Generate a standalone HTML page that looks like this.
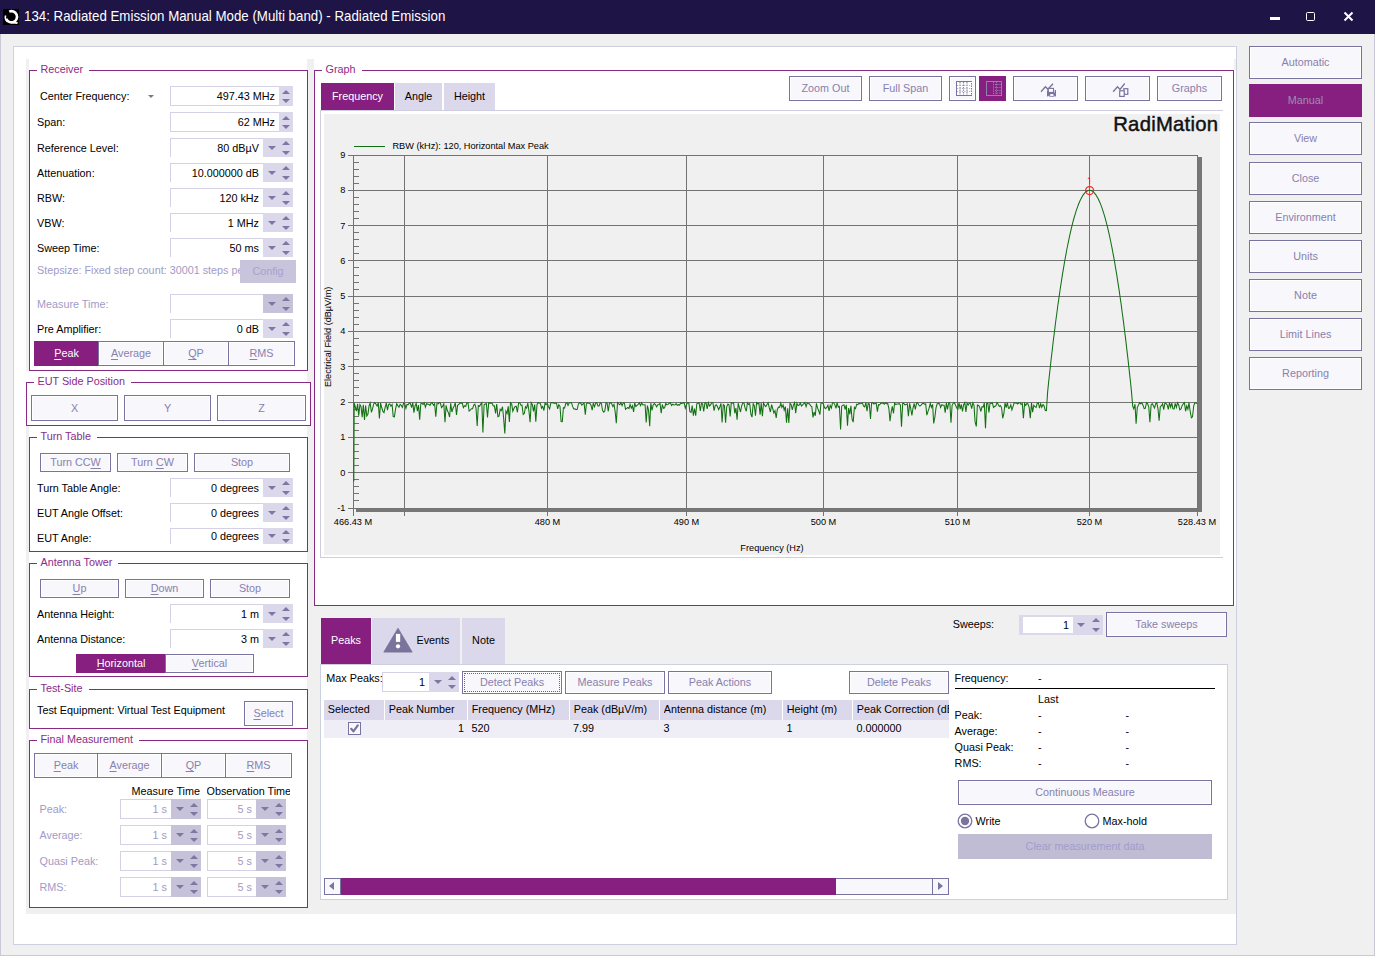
<!DOCTYPE html>
<html><head><meta charset="utf-8"><title>Radiated Emission</title>
<style>
html,body{margin:0;padding:0;}
body{width:1375px;height:956px;position:relative;overflow:hidden;background:#f0f0f0;font-family:"Liberation Sans",sans-serif;}
.r{position:absolute;}
.t{position:absolute;white-space:nowrap;}
.bt{display:flex;align-items:center;justify-content:center;line-height:1;}
u{text-decoration:underline;text-underline-offset:1.5px;}
</style></head><body>
<div class="r" style="left:0;top:0;width:1375px;height:34px;background:#1e1446"></div>
<div class="r" style="left:0px;top:34px;width:1px;height:922px;background:#c9c9da;"></div>
<div class="r" style="left:1374px;top:34px;width:1px;height:922px;background:#c9c9da;"></div>
<div class="r" style="left:0px;top:955px;width:1375px;height:1px;background:#c9c9da;"></div>
<svg class="r" style="left:3px;top:9px" width="16" height="16" viewBox="0 0 16 16">
<rect width="16" height="16" fill="#000"/>
<path d="M6.2 2.6 A5.6 5.6 0 1 1 3.2 9.8" fill="none" stroke="#fff" stroke-width="2.6"/>
<path d="M2.6 6.5 A5.6 5.6 0 0 0 4.5 12.6" fill="none" stroke="#fff" stroke-width="1.6"/>
<path d="M9.5 12.8 L15 13.2 L14.2 15 L10 14.6 Z" fill="#fff"/>
</svg>
<div class="t" style="left:23.8px;top:8.37px;font-size:14.4px;line-height:17.28px;color:#fff;transform:scaleX(0.924);transform-origin:0 0;">134: Radiated Emission Manual Mode (Multi band) - Radiated Emission</div>
<div class="r" style="left:1270px;top:17px;width:10px;height:3px;background:#fff;"></div>
<div class="r" style="left:1306px;top:12px;width:9px;height:9px;box-sizing:border-box;border:1.5px solid #fff;border-radius:1.5px"></div>
<svg class="r" style="left:1343px;top:11px" width="11" height="11" viewBox="0 0 11 11"><path d="M1.5 1.5 L9.5 9.5 M9.5 1.5 L1.5 9.5" stroke="#fff" stroke-width="2"/></svg>
<div class="r" style="left:13px;top:46px;width:1224px;height:899px;background:#fff;box-sizing:border-box;border:1px solid #cdd0df;"></div>
<div class="r" style="left:26px;top:59px;width:3px;height:312px;background:#f0f0f0;"></div>
<div class="r" style="left:26px;top:426px;width:3px;height:488px;background:#f0f0f0;"></div>
<div class="r" style="left:307px;top:59px;width:7px;height:855px;background:#f0f0f0;"></div>
<div class="r" style="left:26px;top:907px;width:1210px;height:7px;background:#f0f0f0;"></div>
<div class="r" style="left:314px;top:606px;width:922px;height:308px;background:#f0f0f0;"></div>
<div class="r" style="left:1234px;top:59px;width:2px;height:11px;background:#f0f0f0;"></div>
<div class="r" style="left:29px;top:70px;width:279px;height:301px;background:#fff;box-sizing:border-box;border:1px solid #862a84;"></div>
<div class="t" style="left:37px;top:62.98px;font-size:10.8px;line-height:12.96px;color:#8b2b89;background:#fff;padding:0 6px 0 3.5px;">Receiver</div>
<div class="t" style="left:40px;top:89.78px;font-size:10.8px;line-height:12.96px;color:#000;">Center Frequency:</div>
<div class="r" style="left:170px;top:86px;width:123px;height:20px;background:#fff;box-sizing:border-box;border:1px solid #d4d0e6;"></div>
<div class="r" style="left:279px;top:86px;width:14px;height:20px;background:#dcd8ec;"></div>
<div class="r" style="left:281.5px;top:89.8px;width:0;height:0;border-left:4.5px solid transparent;border-right:4.5px solid transparent;border-bottom:4px solid #7d77a1;"></div>
<div class="r" style="left:281.5px;top:99.0px;width:0;height:0;border-left:4.5px solid transparent;border-right:4.5px solid transparent;border-top:4px solid #7d77a1;"></div>
<div class="t" style="right:1100px;top:90.38px;font-size:10.8px;line-height:12.96px;color:#000;text-align:right;">497.43 MHz</div>
<div class="t" style="left:37px;top:115.78px;font-size:10.8px;line-height:12.96px;color:#000;">Span:</div>
<div class="r" style="left:170px;top:112px;width:123px;height:20px;background:#fff;box-sizing:border-box;border:1px solid #d4d0e6;"></div>
<div class="r" style="left:279px;top:112px;width:14px;height:20px;background:#dcd8ec;"></div>
<div class="r" style="left:281.5px;top:115.8px;width:0;height:0;border-left:4.5px solid transparent;border-right:4.5px solid transparent;border-bottom:4px solid #7d77a1;"></div>
<div class="r" style="left:281.5px;top:125.0px;width:0;height:0;border-left:4.5px solid transparent;border-right:4.5px solid transparent;border-top:4px solid #7d77a1;"></div>
<div class="t" style="right:1100px;top:116.38px;font-size:10.8px;line-height:12.96px;color:#000;text-align:right;">62 MHz</div>
<div class="t" style="left:37px;top:141.78px;font-size:10.8px;line-height:12.96px;color:#000;">Reference Level:</div>
<div class="r" style="left:170px;top:138px;width:93px;height:19px;background:#fff;border-top:1px solid #d4d0e6;border-left:1px solid #d4d0e6;box-sizing:border-box;"></div>
<div class="r" style="left:263px;top:138px;width:30px;height:19px;background:#dcd8ec;"></div>
<div class="r" style="left:267.5px;top:145.5px;width:0;height:0;border-left:4.0px solid transparent;border-right:4.0px solid transparent;border-top:4px solid #7d77a1;"></div>
<div class="r" style="left:281.5px;top:141.3px;width:0;height:0;border-left:4.5px solid transparent;border-right:4.5px solid transparent;border-bottom:4px solid #7d77a1;"></div>
<div class="r" style="left:281.5px;top:150.5px;width:0;height:0;border-left:4.5px solid transparent;border-right:4.5px solid transparent;border-top:4px solid #7d77a1;"></div>
<div class="t" style="right:1116px;top:141.88px;font-size:10.8px;line-height:12.96px;color:#000;text-align:right;">80 dBµV</div>
<div class="t" style="left:37px;top:166.78px;font-size:10.8px;line-height:12.96px;color:#000;">Attenuation:</div>
<div class="r" style="left:170px;top:163px;width:93px;height:19px;background:#fff;border-top:1px solid #d4d0e6;border-left:1px solid #d4d0e6;box-sizing:border-box;"></div>
<div class="r" style="left:263px;top:163px;width:30px;height:19px;background:#dcd8ec;"></div>
<div class="r" style="left:267.5px;top:170.5px;width:0;height:0;border-left:4.0px solid transparent;border-right:4.0px solid transparent;border-top:4px solid #7d77a1;"></div>
<div class="r" style="left:281.5px;top:166.3px;width:0;height:0;border-left:4.5px solid transparent;border-right:4.5px solid transparent;border-bottom:4px solid #7d77a1;"></div>
<div class="r" style="left:281.5px;top:175.5px;width:0;height:0;border-left:4.5px solid transparent;border-right:4.5px solid transparent;border-top:4px solid #7d77a1;"></div>
<div class="t" style="right:1116px;top:166.88px;font-size:10.8px;line-height:12.96px;color:#000;text-align:right;">10.000000 dB</div>
<div class="t" style="left:37px;top:191.78px;font-size:10.8px;line-height:12.96px;color:#000;">RBW:</div>
<div class="r" style="left:170px;top:188px;width:93px;height:19px;background:#fff;border-top:1px solid #d4d0e6;border-left:1px solid #d4d0e6;box-sizing:border-box;"></div>
<div class="r" style="left:263px;top:188px;width:30px;height:19px;background:#dcd8ec;"></div>
<div class="r" style="left:267.5px;top:195.5px;width:0;height:0;border-left:4.0px solid transparent;border-right:4.0px solid transparent;border-top:4px solid #7d77a1;"></div>
<div class="r" style="left:281.5px;top:191.3px;width:0;height:0;border-left:4.5px solid transparent;border-right:4.5px solid transparent;border-bottom:4px solid #7d77a1;"></div>
<div class="r" style="left:281.5px;top:200.5px;width:0;height:0;border-left:4.5px solid transparent;border-right:4.5px solid transparent;border-top:4px solid #7d77a1;"></div>
<div class="t" style="right:1116px;top:191.88px;font-size:10.8px;line-height:12.96px;color:#000;text-align:right;">120 kHz</div>
<div class="t" style="left:37px;top:216.78px;font-size:10.8px;line-height:12.96px;color:#000;">VBW:</div>
<div class="r" style="left:170px;top:213px;width:93px;height:19px;background:#fff;border-top:1px solid #d4d0e6;border-left:1px solid #d4d0e6;box-sizing:border-box;"></div>
<div class="r" style="left:263px;top:213px;width:30px;height:19px;background:#dcd8ec;"></div>
<div class="r" style="left:267.5px;top:220.5px;width:0;height:0;border-left:4.0px solid transparent;border-right:4.0px solid transparent;border-top:4px solid #7d77a1;"></div>
<div class="r" style="left:281.5px;top:216.3px;width:0;height:0;border-left:4.5px solid transparent;border-right:4.5px solid transparent;border-bottom:4px solid #7d77a1;"></div>
<div class="r" style="left:281.5px;top:225.5px;width:0;height:0;border-left:4.5px solid transparent;border-right:4.5px solid transparent;border-top:4px solid #7d77a1;"></div>
<div class="t" style="right:1116px;top:216.88px;font-size:10.8px;line-height:12.96px;color:#000;text-align:right;">1 MHz</div>
<div class="t" style="left:37px;top:241.78px;font-size:10.8px;line-height:12.96px;color:#000;">Sweep Time:</div>
<div class="r" style="left:170px;top:238px;width:93px;height:19px;background:#fff;border-top:1px solid #d4d0e6;border-left:1px solid #d4d0e6;box-sizing:border-box;"></div>
<div class="r" style="left:263px;top:238px;width:30px;height:19px;background:#dcd8ec;"></div>
<div class="r" style="left:267.5px;top:245.5px;width:0;height:0;border-left:4.0px solid transparent;border-right:4.0px solid transparent;border-top:4px solid #7d77a1;"></div>
<div class="r" style="left:281.5px;top:241.3px;width:0;height:0;border-left:4.5px solid transparent;border-right:4.5px solid transparent;border-bottom:4px solid #7d77a1;"></div>
<div class="r" style="left:281.5px;top:250.5px;width:0;height:0;border-left:4.5px solid transparent;border-right:4.5px solid transparent;border-top:4px solid #7d77a1;"></div>
<div class="t" style="right:1116px;top:241.88px;font-size:10.8px;line-height:12.96px;color:#000;text-align:right;">50 ms</div>
<div class="t" style="left:37px;top:297.78px;font-size:10.8px;line-height:12.96px;color:#a29ac6;">Measure Time:</div>
<div class="r" style="left:170px;top:294px;width:93px;height:19px;background:#fff;border-top:1px solid #d4d0e6;border-left:1px solid #d4d0e6;box-sizing:border-box;"></div>
<div class="r" style="left:263px;top:294px;width:30px;height:19px;background:#c6c2da;"></div>
<div class="r" style="left:267.5px;top:301.5px;width:0;height:0;border-left:4.0px solid transparent;border-right:4.0px solid transparent;border-top:4px solid #7d77a1;"></div>
<div class="r" style="left:281.5px;top:297.3px;width:0;height:0;border-left:4.5px solid transparent;border-right:4.5px solid transparent;border-bottom:4px solid #7d77a1;"></div>
<div class="r" style="left:281.5px;top:306.5px;width:0;height:0;border-left:4.5px solid transparent;border-right:4.5px solid transparent;border-top:4px solid #7d77a1;"></div>
<div class="t" style="left:37px;top:322.78px;font-size:10.8px;line-height:12.96px;color:#000;">Pre Amplifier:</div>
<div class="r" style="left:170px;top:319px;width:93px;height:19px;background:#fff;border-top:1px solid #d4d0e6;border-left:1px solid #d4d0e6;box-sizing:border-box;"></div>
<div class="r" style="left:263px;top:319px;width:30px;height:19px;background:#dcd8ec;"></div>
<div class="r" style="left:267.5px;top:326.5px;width:0;height:0;border-left:4.0px solid transparent;border-right:4.0px solid transparent;border-top:4px solid #7d77a1;"></div>
<div class="r" style="left:281.5px;top:322.3px;width:0;height:0;border-left:4.5px solid transparent;border-right:4.5px solid transparent;border-bottom:4px solid #7d77a1;"></div>
<div class="r" style="left:281.5px;top:331.5px;width:0;height:0;border-left:4.5px solid transparent;border-right:4.5px solid transparent;border-top:4px solid #7d77a1;"></div>
<div class="t" style="right:1116px;top:322.88px;font-size:10.8px;line-height:12.96px;color:#000;text-align:right;">0 dB</div>
<div class="r" style="left:148.0px;top:94.8px;width:0;height:0;border-left:3.1px solid transparent;border-right:3.1px solid transparent;border-top:3.4px solid #7a7a7a;"></div>
<div class="t" style="left:37px;top:263.78px;font-size:10.8px;line-height:12.96px;color:#a29ac6;width:203px;overflow:hidden;">Stepsize: Fixed step count: 30001 steps per</div>
<div class="r" style="left:240px;top:260px;width:56px;height:23px;background:#c8c4dc;"></div>
<div class="t bt" style="left:240px;top:260px;width:56px;height:23px;font-size:10.8px;color:#a9a1cc;">Config</div>
<div class="r" style="left:34px;top:341px;width:65px;height:25px;background:#861f80;"></div>
<div class="t bt" style="left:34px;top:341px;width:65px;height:25px;font-size:10.8px;color:#fff;"><span><u>P</u>eak</span></div>
<div class="r" style="left:98px;top:341px;width:66px;height:25px;background:#f7f7fc;box-sizing:border-box;border:1px solid #79739f;box-shadow: inset 0 0 0 1px #fff;"></div>
<div class="t bt" style="left:98px;top:341px;width:66px;height:25px;font-size:10.8px;color:#8981ad;"><span><u>A</u>verage</span></div>
<div class="r" style="left:163px;top:341px;width:66px;height:25px;background:#f7f7fc;box-sizing:border-box;border:1px solid #79739f;box-shadow: inset 0 0 0 1px #fff;"></div>
<div class="t bt" style="left:163px;top:341px;width:66px;height:25px;font-size:10.8px;color:#8981ad;"><span><u>Q</u>P</span></div>
<div class="r" style="left:228px;top:341px;width:67px;height:25px;background:#f7f7fc;box-sizing:border-box;border:1px solid #79739f;box-shadow: inset 0 0 0 1px #fff;"></div>
<div class="t bt" style="left:228px;top:341px;width:67px;height:25px;font-size:10.8px;color:#8981ad;"><span><u>R</u>MS</span></div>
<div class="r" style="left:26px;top:382px;width:285px;height:44px;background:#fff;box-sizing:border-box;border:1px solid #862a84;"></div>
<div class="t" style="left:34px;top:374.98px;font-size:10.8px;line-height:12.96px;color:#8b2b89;background:#fff;padding:0 6px 0 3.5px;">EUT Side Position</div>
<div class="r" style="left:31px;top:395px;width:87px;height:26px;background:#f7f7fc;box-sizing:border-box;border:1px solid #79739f;box-shadow: inset 0 0 0 1px #fff;"></div>
<div class="t bt" style="left:31px;top:395px;width:87px;height:26px;font-size:10.8px;color:#8981ad;"><span>X</span></div>
<div class="r" style="left:124px;top:395px;width:87px;height:26px;background:#f7f7fc;box-sizing:border-box;border:1px solid #79739f;box-shadow: inset 0 0 0 1px #fff;"></div>
<div class="t bt" style="left:124px;top:395px;width:87px;height:26px;font-size:10.8px;color:#8981ad;"><span>Y</span></div>
<div class="r" style="left:217px;top:395px;width:89px;height:26px;background:#f7f7fc;box-sizing:border-box;border:1px solid #79739f;box-shadow: inset 0 0 0 1px #fff;"></div>
<div class="t bt" style="left:217px;top:395px;width:89px;height:26px;font-size:10.8px;color:#8981ad;"><span>Z</span></div>
<div class="r" style="left:29px;top:437px;width:279px;height:115px;background:#fff;box-sizing:border-box;border:1px solid #862a84;"></div>
<div class="t" style="left:37px;top:429.98px;font-size:10.8px;line-height:12.96px;color:#8b2b89;background:#fff;padding:0 6px 0 3.5px;">Turn Table</div>
<div class="r" style="left:40px;top:453px;width:71px;height:19px;background:#f7f7fc;box-sizing:border-box;border:1px solid #79739f;box-shadow: inset 0 0 0 1px #fff;"></div>
<div class="t bt" style="left:40px;top:453px;width:71px;height:19px;font-size:10.8px;color:#8981ad;"><span>Turn CC<u>W</u></span></div>
<div class="r" style="left:117px;top:453px;width:71px;height:19px;background:#f7f7fc;box-sizing:border-box;border:1px solid #79739f;box-shadow: inset 0 0 0 1px #fff;"></div>
<div class="t bt" style="left:117px;top:453px;width:71px;height:19px;font-size:10.8px;color:#8981ad;"><span>Turn <u>C</u>W</span></div>
<div class="r" style="left:194px;top:453px;width:96px;height:19px;background:#f7f7fc;box-sizing:border-box;border:1px solid #79739f;box-shadow: inset 0 0 0 1px #fff;"></div>
<div class="t bt" style="left:194px;top:453px;width:96px;height:19px;font-size:10.8px;color:#8981ad;"><span>Stop</span></div>
<div class="t" style="left:37px;top:481.78px;font-size:10.8px;line-height:12.96px;color:#000;">Turn Table Angle:</div>
<div class="r" style="left:170px;top:478px;width:93px;height:19px;background:#fff;border-top:1px solid #d4d0e6;border-left:1px solid #d4d0e6;box-sizing:border-box;"></div>
<div class="r" style="left:263px;top:478px;width:30px;height:19px;background:#dcd8ec;"></div>
<div class="r" style="left:267.5px;top:485.5px;width:0;height:0;border-left:4.0px solid transparent;border-right:4.0px solid transparent;border-top:4px solid #7d77a1;"></div>
<div class="r" style="left:281.5px;top:481.3px;width:0;height:0;border-left:4.5px solid transparent;border-right:4.5px solid transparent;border-bottom:4px solid #7d77a1;"></div>
<div class="r" style="left:281.5px;top:490.5px;width:0;height:0;border-left:4.5px solid transparent;border-right:4.5px solid transparent;border-top:4px solid #7d77a1;"></div>
<div class="t" style="right:1116px;top:481.88px;font-size:10.8px;line-height:12.96px;color:#000;text-align:right;">0 degrees</div>
<div class="t" style="left:37px;top:506.78px;font-size:10.8px;line-height:12.96px;color:#000;">EUT Angle Offset:</div>
<div class="r" style="left:170px;top:503px;width:93px;height:19px;background:#fff;border-top:1px solid #d4d0e6;border-left:1px solid #d4d0e6;box-sizing:border-box;"></div>
<div class="r" style="left:263px;top:503px;width:30px;height:19px;background:#dcd8ec;"></div>
<div class="r" style="left:267.5px;top:510.5px;width:0;height:0;border-left:4.0px solid transparent;border-right:4.0px solid transparent;border-top:4px solid #7d77a1;"></div>
<div class="r" style="left:281.5px;top:506.3px;width:0;height:0;border-left:4.5px solid transparent;border-right:4.5px solid transparent;border-bottom:4px solid #7d77a1;"></div>
<div class="r" style="left:281.5px;top:515.5px;width:0;height:0;border-left:4.5px solid transparent;border-right:4.5px solid transparent;border-top:4px solid #7d77a1;"></div>
<div class="t" style="right:1116px;top:506.88px;font-size:10.8px;line-height:12.96px;color:#000;text-align:right;">0 degrees</div>
<div class="t" style="left:37px;top:531.78px;font-size:10.8px;line-height:12.96px;color:#000;">EUT Angle:</div>
<div class="r" style="left:170px;top:528px;width:93px;height:16px;background:#fff;border-top:1px solid #d4d0e6;border-left:1px solid #d4d0e6;box-sizing:border-box;"></div>
<div class="r" style="left:263px;top:528px;width:30px;height:16px;background:#dcd8ec;"></div>
<div class="r" style="left:267.5px;top:534.0px;width:0;height:0;border-left:4.0px solid transparent;border-right:4.0px solid transparent;border-top:4px solid #7d77a1;"></div>
<div class="r" style="left:281.5px;top:529.8px;width:0;height:0;border-left:4.5px solid transparent;border-right:4.5px solid transparent;border-bottom:4px solid #7d77a1;"></div>
<div class="r" style="left:281.5px;top:539.0px;width:0;height:0;border-left:4.5px solid transparent;border-right:4.5px solid transparent;border-top:4px solid #7d77a1;"></div>
<div class="t" style="right:1116px;top:530.38px;font-size:10.8px;line-height:12.96px;color:#000;text-align:right;">0 degrees</div>
<div class="r" style="left:29px;top:563px;width:279px;height:114px;background:#fff;box-sizing:border-box;border:1px solid #862a84;"></div>
<div class="t" style="left:37px;top:555.98px;font-size:10.8px;line-height:12.96px;color:#8b2b89;background:#fff;padding:0 6px 0 3.5px;">Antenna Tower</div>
<div class="r" style="left:40px;top:579px;width:79px;height:19px;background:#f7f7fc;box-sizing:border-box;border:1px solid #79739f;box-shadow: inset 0 0 0 1px #fff;"></div>
<div class="t bt" style="left:40px;top:579px;width:79px;height:19px;font-size:10.8px;color:#8981ad;"><span><u>U</u>p</span></div>
<div class="r" style="left:125px;top:579px;width:79px;height:19px;background:#f7f7fc;box-sizing:border-box;border:1px solid #79739f;box-shadow: inset 0 0 0 1px #fff;"></div>
<div class="t bt" style="left:125px;top:579px;width:79px;height:19px;font-size:10.8px;color:#8981ad;"><span><u>D</u>own</span></div>
<div class="r" style="left:210px;top:579px;width:80px;height:19px;background:#f7f7fc;box-sizing:border-box;border:1px solid #79739f;box-shadow: inset 0 0 0 1px #fff;"></div>
<div class="t bt" style="left:210px;top:579px;width:80px;height:19px;font-size:10.8px;color:#8981ad;"><span>Stop</span></div>
<div class="t" style="left:37px;top:607.78px;font-size:10.8px;line-height:12.96px;color:#000;">Antenna Height:</div>
<div class="r" style="left:170px;top:604px;width:93px;height:19px;background:#fff;border-top:1px solid #d4d0e6;border-left:1px solid #d4d0e6;box-sizing:border-box;"></div>
<div class="r" style="left:263px;top:604px;width:30px;height:19px;background:#dcd8ec;"></div>
<div class="r" style="left:267.5px;top:611.5px;width:0;height:0;border-left:4.0px solid transparent;border-right:4.0px solid transparent;border-top:4px solid #7d77a1;"></div>
<div class="r" style="left:281.5px;top:607.3px;width:0;height:0;border-left:4.5px solid transparent;border-right:4.5px solid transparent;border-bottom:4px solid #7d77a1;"></div>
<div class="r" style="left:281.5px;top:616.5px;width:0;height:0;border-left:4.5px solid transparent;border-right:4.5px solid transparent;border-top:4px solid #7d77a1;"></div>
<div class="t" style="right:1116px;top:607.88px;font-size:10.8px;line-height:12.96px;color:#000;text-align:right;">1 m</div>
<div class="t" style="left:37px;top:632.78px;font-size:10.8px;line-height:12.96px;color:#000;">Antenna Distance:</div>
<div class="r" style="left:170px;top:629px;width:93px;height:19px;background:#fff;border-top:1px solid #d4d0e6;border-left:1px solid #d4d0e6;box-sizing:border-box;"></div>
<div class="r" style="left:263px;top:629px;width:30px;height:19px;background:#dcd8ec;"></div>
<div class="r" style="left:267.5px;top:636.5px;width:0;height:0;border-left:4.0px solid transparent;border-right:4.0px solid transparent;border-top:4px solid #7d77a1;"></div>
<div class="r" style="left:281.5px;top:632.3px;width:0;height:0;border-left:4.5px solid transparent;border-right:4.5px solid transparent;border-bottom:4px solid #7d77a1;"></div>
<div class="r" style="left:281.5px;top:641.5px;width:0;height:0;border-left:4.5px solid transparent;border-right:4.5px solid transparent;border-top:4px solid #7d77a1;"></div>
<div class="t" style="right:1116px;top:632.88px;font-size:10.8px;line-height:12.96px;color:#000;text-align:right;">3 m</div>
<div class="r" style="left:76px;top:654px;width:90px;height:19px;background:#861f80;"></div>
<div class="t bt" style="left:76px;top:654px;width:90px;height:19px;font-size:10.8px;color:#fff;"><span><u>H</u>orizontal</span></div>
<div class="r" style="left:165px;top:654px;width:89px;height:19px;background:#f7f7fc;box-sizing:border-box;border:1px solid #79739f;box-shadow: inset 0 0 0 1px #fff;"></div>
<div class="t bt" style="left:165px;top:654px;width:89px;height:19px;font-size:10.8px;color:#8981ad;"><span><u>V</u>ertical</span></div>
<div class="r" style="left:29px;top:689px;width:279px;height:40px;background:#fff;box-sizing:border-box;border:1px solid #862a84;"></div>
<div class="t" style="left:37px;top:681.98px;font-size:10.8px;line-height:12.96px;color:#8b2b89;background:#fff;padding:0 6px 0 3.5px;">Test-Site</div>
<div class="t" style="left:37px;top:703.78px;font-size:10.8px;line-height:12.96px;color:#000;">Test Equipment: Virtual Test Equipment</div>
<div class="r" style="left:244px;top:701px;width:49px;height:25px;background:#f7f7fc;box-sizing:border-box;border:1px solid #79739f;box-shadow: inset 0 0 0 1px #fff;"></div>
<div class="t bt" style="left:244px;top:701px;width:49px;height:25px;font-size:10.8px;color:#8981ad;"><span><u>S</u>elect</span></div>
<div class="r" style="left:29px;top:740px;width:279px;height:168px;background:#fff;box-sizing:border-box;border:1px solid #862a84;"></div>
<div class="t" style="left:37px;top:732.98px;font-size:10.8px;line-height:12.96px;color:#8b2b89;background:#fff;padding:0 6px 0 3.5px;">Final Measurement</div>
<div class="r" style="left:34px;top:753px;width:64px;height:25px;background:#f7f7fc;box-sizing:border-box;border:1px solid #79739f;box-shadow: inset 0 0 0 1px #fff;"></div>
<div class="t bt" style="left:34px;top:753px;width:64px;height:25px;font-size:10.8px;color:#8981ad;"><span><u>P</u>eak</span></div>
<div class="r" style="left:97px;top:753px;width:65px;height:25px;background:#f7f7fc;box-sizing:border-box;border:1px solid #79739f;box-shadow: inset 0 0 0 1px #fff;"></div>
<div class="t bt" style="left:97px;top:753px;width:65px;height:25px;font-size:10.8px;color:#8981ad;"><span><u>A</u>verage</span></div>
<div class="r" style="left:161px;top:753px;width:65px;height:25px;background:#f7f7fc;box-sizing:border-box;border:1px solid #79739f;box-shadow: inset 0 0 0 1px #fff;"></div>
<div class="t bt" style="left:161px;top:753px;width:65px;height:25px;font-size:10.8px;color:#8981ad;"><span><u>Q</u>P</span></div>
<div class="r" style="left:225px;top:753px;width:67px;height:25px;background:#f7f7fc;box-sizing:border-box;border:1px solid #79739f;box-shadow: inset 0 0 0 1px #fff;"></div>
<div class="t bt" style="left:225px;top:753px;width:67px;height:25px;font-size:10.8px;color:#8981ad;"><span><u>R</u>MS</span></div>
<div class="t" style="right:1175px;top:784.78px;font-size:10.8px;line-height:12.96px;color:#000;text-align:right;">Measure Time</div>
<div class="t" style="left:206.5px;top:784.78px;font-size:10.8px;line-height:12.96px;color:#000;width:83px;overflow:hidden;">Observation Time</div>
<div class="t" style="left:39.5px;top:802.78px;font-size:10.8px;line-height:12.96px;color:#a29ac6;">Peak:</div>
<div class="r" style="left:120px;top:799px;width:81px;height:20px;background:#fff;box-sizing:border-box;border:1px solid #d4d0e6;"></div>
<div class="r" style="left:171px;top:799px;width:30px;height:20px;background:#c6c2da;"></div>
<div class="r" style="left:175.5px;top:807.0px;width:0;height:0;border-left:4.0px solid transparent;border-right:4.0px solid transparent;border-top:4px solid #7d77a1;"></div>
<div class="r" style="left:189.5px;top:802.8px;width:0;height:0;border-left:4.5px solid transparent;border-right:4.5px solid transparent;border-bottom:4px solid #7d77a1;"></div>
<div class="r" style="left:189.5px;top:812.0px;width:0;height:0;border-left:4.5px solid transparent;border-right:4.5px solid transparent;border-top:4px solid #7d77a1;"></div>
<div class="t" style="right:1208px;top:803.38px;font-size:10.8px;line-height:12.96px;color:#a29ac6;text-align:right;">1 s</div>
<div class="r" style="left:207px;top:799px;width:79px;height:20px;background:#fff;box-sizing:border-box;border:1px solid #d4d0e6;"></div>
<div class="r" style="left:256px;top:799px;width:30px;height:20px;background:#c6c2da;"></div>
<div class="r" style="left:260.5px;top:807.0px;width:0;height:0;border-left:4.0px solid transparent;border-right:4.0px solid transparent;border-top:4px solid #7d77a1;"></div>
<div class="r" style="left:274.5px;top:802.8px;width:0;height:0;border-left:4.5px solid transparent;border-right:4.5px solid transparent;border-bottom:4px solid #7d77a1;"></div>
<div class="r" style="left:274.5px;top:812.0px;width:0;height:0;border-left:4.5px solid transparent;border-right:4.5px solid transparent;border-top:4px solid #7d77a1;"></div>
<div class="t" style="right:1123px;top:803.38px;font-size:10.8px;line-height:12.96px;color:#a29ac6;text-align:right;">5 s</div>
<div class="t" style="left:39.5px;top:828.78px;font-size:10.8px;line-height:12.96px;color:#a29ac6;">Average:</div>
<div class="r" style="left:120px;top:825px;width:81px;height:20px;background:#fff;box-sizing:border-box;border:1px solid #d4d0e6;"></div>
<div class="r" style="left:171px;top:825px;width:30px;height:20px;background:#c6c2da;"></div>
<div class="r" style="left:175.5px;top:833.0px;width:0;height:0;border-left:4.0px solid transparent;border-right:4.0px solid transparent;border-top:4px solid #7d77a1;"></div>
<div class="r" style="left:189.5px;top:828.8px;width:0;height:0;border-left:4.5px solid transparent;border-right:4.5px solid transparent;border-bottom:4px solid #7d77a1;"></div>
<div class="r" style="left:189.5px;top:838.0px;width:0;height:0;border-left:4.5px solid transparent;border-right:4.5px solid transparent;border-top:4px solid #7d77a1;"></div>
<div class="t" style="right:1208px;top:829.38px;font-size:10.8px;line-height:12.96px;color:#a29ac6;text-align:right;">1 s</div>
<div class="r" style="left:207px;top:825px;width:79px;height:20px;background:#fff;box-sizing:border-box;border:1px solid #d4d0e6;"></div>
<div class="r" style="left:256px;top:825px;width:30px;height:20px;background:#c6c2da;"></div>
<div class="r" style="left:260.5px;top:833.0px;width:0;height:0;border-left:4.0px solid transparent;border-right:4.0px solid transparent;border-top:4px solid #7d77a1;"></div>
<div class="r" style="left:274.5px;top:828.8px;width:0;height:0;border-left:4.5px solid transparent;border-right:4.5px solid transparent;border-bottom:4px solid #7d77a1;"></div>
<div class="r" style="left:274.5px;top:838.0px;width:0;height:0;border-left:4.5px solid transparent;border-right:4.5px solid transparent;border-top:4px solid #7d77a1;"></div>
<div class="t" style="right:1123px;top:829.38px;font-size:10.8px;line-height:12.96px;color:#a29ac6;text-align:right;">5 s</div>
<div class="t" style="left:39.5px;top:854.78px;font-size:10.8px;line-height:12.96px;color:#a29ac6;">Quasi Peak:</div>
<div class="r" style="left:120px;top:851px;width:81px;height:20px;background:#fff;box-sizing:border-box;border:1px solid #d4d0e6;"></div>
<div class="r" style="left:171px;top:851px;width:30px;height:20px;background:#c6c2da;"></div>
<div class="r" style="left:175.5px;top:859.0px;width:0;height:0;border-left:4.0px solid transparent;border-right:4.0px solid transparent;border-top:4px solid #7d77a1;"></div>
<div class="r" style="left:189.5px;top:854.8px;width:0;height:0;border-left:4.5px solid transparent;border-right:4.5px solid transparent;border-bottom:4px solid #7d77a1;"></div>
<div class="r" style="left:189.5px;top:864.0px;width:0;height:0;border-left:4.5px solid transparent;border-right:4.5px solid transparent;border-top:4px solid #7d77a1;"></div>
<div class="t" style="right:1208px;top:855.38px;font-size:10.8px;line-height:12.96px;color:#a29ac6;text-align:right;">1 s</div>
<div class="r" style="left:207px;top:851px;width:79px;height:20px;background:#fff;box-sizing:border-box;border:1px solid #d4d0e6;"></div>
<div class="r" style="left:256px;top:851px;width:30px;height:20px;background:#c6c2da;"></div>
<div class="r" style="left:260.5px;top:859.0px;width:0;height:0;border-left:4.0px solid transparent;border-right:4.0px solid transparent;border-top:4px solid #7d77a1;"></div>
<div class="r" style="left:274.5px;top:854.8px;width:0;height:0;border-left:4.5px solid transparent;border-right:4.5px solid transparent;border-bottom:4px solid #7d77a1;"></div>
<div class="r" style="left:274.5px;top:864.0px;width:0;height:0;border-left:4.5px solid transparent;border-right:4.5px solid transparent;border-top:4px solid #7d77a1;"></div>
<div class="t" style="right:1123px;top:855.38px;font-size:10.8px;line-height:12.96px;color:#a29ac6;text-align:right;">5 s</div>
<div class="t" style="left:39.5px;top:880.78px;font-size:10.8px;line-height:12.96px;color:#a29ac6;">RMS:</div>
<div class="r" style="left:120px;top:877px;width:81px;height:20px;background:#fff;box-sizing:border-box;border:1px solid #d4d0e6;"></div>
<div class="r" style="left:171px;top:877px;width:30px;height:20px;background:#c6c2da;"></div>
<div class="r" style="left:175.5px;top:885.0px;width:0;height:0;border-left:4.0px solid transparent;border-right:4.0px solid transparent;border-top:4px solid #7d77a1;"></div>
<div class="r" style="left:189.5px;top:880.8px;width:0;height:0;border-left:4.5px solid transparent;border-right:4.5px solid transparent;border-bottom:4px solid #7d77a1;"></div>
<div class="r" style="left:189.5px;top:890.0px;width:0;height:0;border-left:4.5px solid transparent;border-right:4.5px solid transparent;border-top:4px solid #7d77a1;"></div>
<div class="t" style="right:1208px;top:881.38px;font-size:10.8px;line-height:12.96px;color:#a29ac6;text-align:right;">1 s</div>
<div class="r" style="left:207px;top:877px;width:79px;height:20px;background:#fff;box-sizing:border-box;border:1px solid #d4d0e6;"></div>
<div class="r" style="left:256px;top:877px;width:30px;height:20px;background:#c6c2da;"></div>
<div class="r" style="left:260.5px;top:885.0px;width:0;height:0;border-left:4.0px solid transparent;border-right:4.0px solid transparent;border-top:4px solid #7d77a1;"></div>
<div class="r" style="left:274.5px;top:880.8px;width:0;height:0;border-left:4.5px solid transparent;border-right:4.5px solid transparent;border-bottom:4px solid #7d77a1;"></div>
<div class="r" style="left:274.5px;top:890.0px;width:0;height:0;border-left:4.5px solid transparent;border-right:4.5px solid transparent;border-top:4px solid #7d77a1;"></div>
<div class="t" style="right:1123px;top:881.38px;font-size:10.8px;line-height:12.96px;color:#a29ac6;text-align:right;">5 s</div>
<div class="r" style="left:314px;top:70px;width:920px;height:536px;background:#fff;box-sizing:border-box;border:1px solid #862a84;"></div>
<div class="t" style="left:322px;top:62.98px;font-size:10.8px;line-height:12.96px;color:#8b2b89;background:#fff;padding:0 6px 0 3.5px;">Graph</div>
<div class="r" style="left:321px;top:83px;width:73px;height:28px;background:#861f80;"></div>
<div class="t bt" style="left:321px;top:82px;width:73px;height:28px;font-size:10.8px;color:#fff;">Frequency</div>
<div class="r" style="left:395px;top:83px;width:47px;height:28px;background:#dcd8ec;"></div>
<div class="t bt" style="left:395px;top:82px;width:47px;height:28px;font-size:10.8px;color:#000;">Angle</div>
<div class="r" style="left:444px;top:83px;width:51px;height:28px;background:#dcd8ec;"></div>
<div class="t bt" style="left:444px;top:82px;width:51px;height:28px;font-size:10.8px;color:#000;">Height</div>
<div class="r" style="left:320px;top:110px;width:903px;height:1px;background:#cfcde0;"></div>
<div class="r" style="left:320px;top:111px;width:1px;height:447px;background:#cfcde0;"></div>
<div class="r" style="left:320px;top:557px;width:903px;height:1px;background:#cfcde0;"></div>
<div class="r" style="left:789px;top:76px;width:73px;height:25px;background:#f7f7fc;box-sizing:border-box;border:1px solid #79739f;box-shadow: inset 0 0 0 1px #fff;"></div>
<div class="t bt" style="left:789px;top:76px;width:73px;height:25px;font-size:10.8px;color:#8981ad;"><span>Zoom Out</span></div>
<div class="r" style="left:869px;top:76px;width:73px;height:25px;background:#f7f7fc;box-sizing:border-box;border:1px solid #79739f;box-shadow: inset 0 0 0 1px #fff;"></div>
<div class="t bt" style="left:869px;top:76px;width:73px;height:25px;font-size:10.8px;color:#8981ad;"><span>Full Span</span></div>
<div class="r" style="left:949px;top:76px;width:27px;height:25px;background:#f7f7fc;box-sizing:border-box;border:1px solid #79739f;box-shadow: inset 0 0 0 1px #fff;"></div>
<div class="r" style="left:979px;top:76px;width:27px;height:25px;background:#861f80;"></div>
<div class="r" style="left:1013px;top:76px;width:65px;height:25px;background:#f7f7fc;box-sizing:border-box;border:1px solid #79739f;box-shadow: inset 0 0 0 1px #fff;"></div>
<div class="r" style="left:1085px;top:76px;width:65px;height:25px;background:#f7f7fc;box-sizing:border-box;border:1px solid #79739f;box-shadow: inset 0 0 0 1px #fff;"></div>
<div class="r" style="left:1157px;top:76px;width:65px;height:25px;background:#f7f7fc;box-sizing:border-box;border:1px solid #79739f;box-shadow: inset 0 0 0 1px #fff;"></div>
<div class="t bt" style="left:1157px;top:76px;width:65px;height:25px;font-size:10.8px;color:#8981ad;"><span>Graphs</span></div>
<svg class="r" style="left:956px;top:81px" width="16" height="15" viewBox="0 0 16 15">
<rect x="0.5" y="0.5" width="15" height="14" fill="#fff" stroke="#79739f"/>
<path d="M4 1 V14 M7.5 1 V14 M11 1 V14" stroke="#8c86ae" stroke-width="1.2" stroke-dasharray="1.6 0.9"/>
<path d="M1 4.5 H15 M1 7.5 H15 M1 10.5 H15" stroke="#b4b0cc" stroke-dasharray="1.2 1.2"/>
<path d="M15.5 1 V14" stroke="#fff" stroke-dasharray="1 1.5"/>
</svg>
<svg class="r" style="left:986px;top:81px" width="16" height="15" viewBox="0 0 16 15">
<rect x="0.5" y="0.5" width="15" height="14" fill="none" stroke="#8b85ab"/>
<path d="M7.5 1 V14 M10.5 1 V14" stroke="#8b85ab" stroke-dasharray="1.2 1"/>
<path d="M9 3.5 H15 M9 6.5 H15 M9 9.5 H15 M9 12 H15" stroke="#8b85ab" stroke-dasharray="1.2 1"/>
</svg>
<svg class="r" style="left:1038px;top:82px" width="20" height="16" viewBox="1038 82 20 16">
<path d="M1041 91.7 L1045.4 86.8 L1047.9 89.3 L1053 83.8" stroke="#79739f" stroke-width="1.3" fill="none"/>
<rect x="1048.3" y="88.4" width="5.2" height="4" fill="#fff" stroke="#79739f" stroke-width="1.1"/>
<rect x="1047" y="92.6" width="9" height="3.2" fill="#79739f"/>
<rect x="1047" y="90.4" width="1.3" height="6" fill="#79739f"/>
<rect x="1054.7" y="90" width="1.3" height="6.4" fill="#79739f"/>
<rect x="1049.3" y="95.6" width="5" height="1.1" fill="#79739f"/>
<rect x="1050.2" y="94.1" width="3.2" height="1.8" fill="#fff"/>
</svg>
<svg class="r" style="left:1110px;top:82px" width="20" height="16" viewBox="1110 82 20 16">
<path d="M1113.1 91.7 L1117.5 86.8 L1120 89.4 L1124.7 83.5" stroke="#79739f" stroke-width="1.3" fill="none"/>
<rect x="1123.8" y="88.7" width="4" height="5.6" fill="none" stroke="#79739f" stroke-width="1.2"/>
<rect x="1119.7" y="90.8" width="4.5" height="5.6" fill="#fff" stroke="#79739f" stroke-width="1.2"/>
</svg>
<div class="r" style="left:324px;top:114px;width:896px;height:441px;background:#f0f0f0;"></div>
<svg class="r" style="left:324px;top:114px" width="896" height="441" viewBox="324 114 896 441" shape-rendering="crispEdges">
<rect x="356" y="509" width="846" height="3" fill="#777"/>
<rect x="1198" y="157" width="4" height="355" fill="#777"/>
<rect x="348" y="508" width="850" height="1" fill="#737373"/>
<rect x="353" y="500" width="6" height="1" fill="#737373"/>
<rect x="353" y="493" width="6" height="1" fill="#737373"/>
<rect x="353" y="486" width="6" height="1" fill="#737373"/>
<rect x="353" y="479" width="6" height="1" fill="#737373"/>
<rect x="348" y="472" width="850" height="1" fill="#737373"/>
<rect x="353" y="465" width="6" height="1" fill="#737373"/>
<rect x="353" y="458" width="6" height="1" fill="#737373"/>
<rect x="353" y="451" width="6" height="1" fill="#737373"/>
<rect x="353" y="444" width="6" height="1" fill="#737373"/>
<rect x="348" y="437" width="850" height="1" fill="#737373"/>
<rect x="353" y="430" width="6" height="1" fill="#737373"/>
<rect x="353" y="423" width="6" height="1" fill="#737373"/>
<rect x="353" y="416" width="6" height="1" fill="#737373"/>
<rect x="353" y="409" width="6" height="1" fill="#737373"/>
<rect x="348" y="402" width="850" height="1" fill="#737373"/>
<rect x="353" y="395" width="6" height="1" fill="#737373"/>
<rect x="353" y="387" width="6" height="1" fill="#737373"/>
<rect x="353" y="380" width="6" height="1" fill="#737373"/>
<rect x="353" y="373" width="6" height="1" fill="#737373"/>
<rect x="348" y="366" width="850" height="1" fill="#737373"/>
<rect x="353" y="359" width="6" height="1" fill="#737373"/>
<rect x="353" y="352" width="6" height="1" fill="#737373"/>
<rect x="353" y="345" width="6" height="1" fill="#737373"/>
<rect x="353" y="338" width="6" height="1" fill="#737373"/>
<rect x="348" y="331" width="850" height="1" fill="#737373"/>
<rect x="353" y="324" width="6" height="1" fill="#737373"/>
<rect x="353" y="317" width="6" height="1" fill="#737373"/>
<rect x="353" y="310" width="6" height="1" fill="#737373"/>
<rect x="353" y="303" width="6" height="1" fill="#737373"/>
<rect x="348" y="296" width="850" height="1" fill="#737373"/>
<rect x="353" y="289" width="6" height="1" fill="#737373"/>
<rect x="353" y="282" width="6" height="1" fill="#737373"/>
<rect x="353" y="275" width="6" height="1" fill="#737373"/>
<rect x="353" y="267" width="6" height="1" fill="#737373"/>
<rect x="348" y="260" width="850" height="1" fill="#737373"/>
<rect x="353" y="253" width="6" height="1" fill="#737373"/>
<rect x="353" y="246" width="6" height="1" fill="#737373"/>
<rect x="353" y="239" width="6" height="1" fill="#737373"/>
<rect x="353" y="232" width="6" height="1" fill="#737373"/>
<rect x="348" y="225" width="850" height="1" fill="#737373"/>
<rect x="353" y="218" width="6" height="1" fill="#737373"/>
<rect x="353" y="211" width="6" height="1" fill="#737373"/>
<rect x="353" y="204" width="6" height="1" fill="#737373"/>
<rect x="353" y="197" width="6" height="1" fill="#737373"/>
<rect x="348" y="190" width="850" height="1" fill="#737373"/>
<rect x="353" y="183" width="6" height="1" fill="#737373"/>
<rect x="353" y="176" width="6" height="1" fill="#737373"/>
<rect x="353" y="169" width="6" height="1" fill="#737373"/>
<rect x="353" y="162" width="6" height="1" fill="#737373"/>
<rect x="348" y="155" width="850" height="1" fill="#737373"/>
<rect x="404" y="155" width="1" height="361" fill="#737373"/>
<rect x="547" y="155" width="1" height="361" fill="#737373"/>
<rect x="686" y="155" width="1" height="361" fill="#737373"/>
<rect x="823" y="155" width="1" height="361" fill="#737373"/>
<rect x="957" y="155" width="1" height="361" fill="#737373"/>
<rect x="1089" y="155" width="1" height="361" fill="#737373"/>
<rect x="353" y="155" width="1" height="361" fill="#737373"/>
<rect x="1197" y="155" width="1" height="361" fill="#737373"/>
<rect x="354" y="146" width="31" height="1" fill="#127012"/>
</svg>
<svg class="r" style="left:324px;top:114px" width="896" height="441" viewBox="324 114 896 441"><path d="M353.8 481.5 L354.2 402.8 L355.3 407.0 L356.4 411.1 L357.6 403.9 L358.7 415.6 L359.9 404.6 L361.0 406.4 L362.2 417.1 L363.3 404.9 L364.5 420.0 L365.6 405.6 L366.8 415.9 L367.9 414.2 L369.1 405.7 L370.2 403.1 L371.4 412.3 L372.5 408.9 L373.7 404.0 L374.8 402.7 L376.0 404.3 L377.1 406.0 L378.3 402.7 L379.4 418.5 L380.6 403.0 L381.7 407.5 L382.9 411.4 L384.0 412.6 L385.2 407.2 L386.3 403.1 L387.5 410.1 L388.6 404.3 L389.8 403.9 L390.9 406.3 L392.1 404.5 L393.2 416.6 L394.4 416.9 L395.5 409.3 L396.7 403.7 L397.8 405.6 L399.0 407.1 L400.1 404.3 L401.3 405.4 L402.4 407.4 L403.6 403.2 L404.7 403.6 L405.9 408.4 L407.0 404.4 L408.2 404.7 L409.3 402.9 L410.5 403.5 L411.6 407.6 L412.8 402.7 L413.9 412.6 L415.1 405.7 L416.2 403.3 L417.4 411.1 L418.5 405.0 L419.7 419.7 L420.8 403.8 L422.0 403.3 L423.1 404.4 L424.3 402.9 L425.4 407.1 L426.6 403.6 L427.7 404.2 L428.9 404.3 L430.0 405.3 L431.2 403.0 L432.3 402.7 L433.5 405.2 L434.6 403.8 L435.8 416.8 L436.9 403.6 L438.1 403.9 L439.2 402.6 L440.4 403.1 L441.5 407.6 L442.7 406.1 L443.8 403.8 L445.0 422.1 L446.1 405.3 L447.3 410.5 L448.4 412.6 L449.6 417.0 L450.7 403.3 L451.9 412.0 L453.0 408.3 L454.2 406.0 L455.3 402.9 L456.5 414.9 L457.6 405.4 L458.8 404.5 L459.9 402.9 L461.1 403.1 L462.2 402.9 L463.4 407.7 L464.5 405.8 L465.7 406.5 L466.8 402.9 L468.0 402.7 L469.1 411.1 L470.3 410.2 L471.4 408.7 L472.6 408.7 L473.7 405.1 L474.9 404.2 L476.0 408.0 L477.2 426.0 L478.3 405.7 L479.5 406.3 L480.6 404.4 L481.8 402.7 L482.9 432.5 L484.1 404.8 L485.2 404.1 L486.4 403.7 L487.5 417.5 L488.7 402.8 L489.8 403.2 L491.0 402.9 L492.1 403.2 L493.3 406.0 L494.4 405.9 L495.6 413.4 L496.7 404.0 L497.9 416.6 L499.0 416.1 L500.2 409.3 L501.3 410.7 L502.5 406.7 L503.6 417.7 L504.8 433.4 L505.9 411.1 L507.1 413.5 L508.2 406.4 L509.4 421.9 L510.5 402.9 L511.7 404.1 L512.8 411.2 L514.0 408.2 L515.1 406.6 L516.3 406.4 L517.4 412.3 L518.6 403.0 L519.7 402.6 L520.9 405.2 L522.0 405.1 L523.2 414.5 L524.3 413.5 L525.5 406.7 L526.6 408.0 L527.8 403.1 L528.9 410.7 L530.1 422.1 L531.2 402.7 L532.4 404.7 L533.5 411.3 L534.7 404.6 L535.8 421.7 L537.0 404.7 L538.1 402.7 L539.3 402.9 L540.4 403.6 L541.6 408.1 L542.7 406.4 L543.9 410.5 L545.0 403.3 L546.2 404.7 L547.3 403.2 L548.5 406.9 L549.6 408.9 L550.8 403.1 L551.9 402.6 L553.1 403.0 L554.2 403.1 L555.4 403.1 L556.5 403.4 L557.7 408.8 L558.8 404.8 L560.0 406.5 L561.1 421.6 L562.3 421.7 L563.4 407.7 L564.6 408.1 L565.7 403.6 L566.9 402.7 L568.0 405.4 L569.2 402.7 L570.3 402.6 L571.5 402.7 L572.6 406.4 L573.8 409.0 L574.9 408.8 L576.1 409.6 L577.2 409.4 L578.4 404.0 L579.5 402.8 L580.7 403.0 L581.8 405.1 L583.0 403.9 L584.1 403.2 L585.3 414.6 L586.4 403.8 L587.6 402.8 L588.7 403.2 L589.9 403.4 L591.0 405.1 L592.2 410.1 L593.3 403.2 L594.5 406.8 L595.6 403.2 L596.8 402.7 L597.9 406.0 L599.1 405.9 L600.2 402.7 L601.4 403.5 L602.5 410.4 L603.7 412.1 L604.8 411.1 L606.0 402.8 L607.1 403.1 L608.3 411.3 L609.4 403.1 L610.6 402.7 L611.7 403.8 L612.9 406.6 L614.0 404.5 L615.2 412.0 L616.3 423.1 L617.5 402.7 L618.6 403.9 L619.8 404.7 L620.9 402.7 L622.1 405.6 L623.2 402.9 L624.4 403.1 L625.5 409.2 L626.7 408.3 L627.8 407.5 L629.0 408.5 L630.1 404.3 L631.3 408.1 L632.4 405.7 L633.6 411.9 L634.7 402.8 L635.9 406.5 L637.0 405.3 L638.2 404.3 L639.3 402.8 L640.5 405.7 L641.6 402.8 L642.8 404.9 L643.9 404.7 L645.1 404.7 L646.2 422.5 L647.4 405.5 L648.5 410.0 L649.7 426.1 L650.8 403.2 L652.0 410.3 L653.1 405.2 L654.3 403.5 L655.4 404.5 L656.6 406.9 L657.7 404.8 L658.9 404.5 L660.0 403.2 L661.2 413.2 L662.3 404.5 L663.5 408.3 L664.6 407.8 L665.8 403.3 L666.9 404.9 L668.1 404.4 L669.2 403.3 L670.4 402.8 L671.5 405.5 L672.7 404.1 L673.8 404.9 L675.0 404.8 L676.1 403.6 L677.3 405.4 L678.4 404.7 L679.6 405.1 L680.7 402.7 L681.9 403.6 L683.0 402.9 L684.2 402.7 L685.3 408.1 L686.5 404.5 L687.6 402.7 L688.8 403.0 L689.9 411.7 L691.1 412.4 L692.2 405.5 L693.4 415.6 L694.5 408.5 L695.7 415.6 L696.8 403.8 L698.0 403.2 L699.1 402.8 L700.3 411.0 L701.4 403.5 L702.6 403.8 L703.7 411.4 L704.9 402.9 L706.0 402.7 L707.2 409.0 L708.3 402.7 L709.5 406.0 L710.6 405.0 L711.8 402.6 L712.9 403.0 L714.1 410.7 L715.2 405.6 L716.4 404.8 L717.5 406.7 L718.7 409.6 L719.8 407.0 L721.0 403.5 L722.1 422.5 L723.3 404.5 L724.4 405.5 L725.6 422.6 L726.7 406.8 L727.9 404.0 L729.0 404.8 L730.2 416.4 L731.3 402.6 L732.5 403.2 L733.6 402.7 L734.8 413.3 L735.9 408.0 L737.1 419.6 L738.2 403.2 L739.4 407.9 L740.5 412.0 L741.7 405.7 L742.8 402.8 L744.0 403.1 L745.1 408.1 L746.3 411.2 L747.4 402.8 L748.6 404.4 L749.7 403.6 L750.9 414.3 L752.0 417.1 L753.2 403.7 L754.3 405.7 L755.5 415.6 L756.6 402.7 L757.8 404.0 L758.9 403.2 L760.1 414.7 L761.2 403.0 L762.4 416.2 L763.5 402.9 L764.7 405.4 L765.8 406.7 L767.0 404.5 L768.1 402.8 L769.3 407.9 L770.4 412.0 L771.6 404.7 L772.7 408.5 L773.9 413.0 L775.0 410.7 L776.2 418.0 L777.3 409.5 L778.5 407.1 L779.6 407.3 L780.8 403.3 L781.9 407.5 L783.1 404.9 L784.2 410.2 L785.4 406.6 L786.5 422.6 L787.7 408.3 L788.8 423.0 L790.0 403.4 L791.1 404.5 L792.3 409.8 L793.4 405.2 L794.6 402.7 L795.7 413.2 L796.9 403.1 L798.0 405.6 L799.2 405.0 L800.3 403.0 L801.5 406.0 L802.6 404.9 L803.8 403.7 L804.9 402.6 L806.1 406.7 L807.2 403.0 L808.4 403.6 L809.5 404.0 L810.7 405.9 L811.8 406.6 L813.0 417.5 L814.1 412.0 L815.3 415.8 L816.4 403.4 L817.6 408.2 L818.7 410.7 L819.9 414.6 L821.0 403.0 L822.2 402.9 L823.3 403.8 L824.5 407.7 L825.6 408.5 L826.8 407.5 L827.9 405.3 L829.1 410.9 L830.2 405.4 L831.4 408.0 L832.5 402.7 L833.7 402.7 L834.8 404.6 L836.0 408.4 L837.1 402.7 L838.3 407.2 L839.4 406.5 L840.6 429.4 L841.7 406.2 L842.9 405.2 L844.0 404.9 L845.2 409.5 L846.3 404.9 L847.5 425.6 L848.6 408.0 L849.8 414.3 L850.9 405.9 L852.1 419.3 L853.2 422.1 L854.4 407.3 L855.5 408.7 L856.7 404.3 L857.8 404.7 L859.0 403.4 L860.1 403.8 L861.3 403.5 L862.4 402.9 L863.6 406.1 L864.7 406.9 L865.9 402.6 L867.0 411.2 L868.2 403.5 L869.3 403.9 L870.5 419.0 L871.6 403.0 L872.8 402.9 L873.9 404.0 L875.1 403.4 L876.2 403.1 L877.4 411.6 L878.5 404.7 L879.7 404.9 L880.8 403.0 L882.0 403.1 L883.1 403.1 L884.3 404.3 L885.4 402.8 L886.6 403.7 L887.7 403.6 L888.9 408.7 L890.0 421.3 L891.2 411.9 L892.3 406.4 L893.5 413.3 L894.6 403.0 L895.8 404.5 L896.9 404.0 L898.1 404.0 L899.2 403.7 L900.4 405.0 L901.5 426.6 L902.7 403.2 L903.8 403.4 L905.0 404.9 L906.1 404.6 L907.3 403.8 L908.4 416.2 L909.6 403.4 L910.7 408.3 L911.9 415.5 L913.0 408.0 L914.2 403.5 L915.3 409.4 L916.5 403.4 L917.6 402.7 L918.8 405.0 L919.9 406.1 L921.1 405.1 L922.2 403.7 L923.4 403.3 L924.5 404.1 L925.7 403.9 L926.8 415.2 L928.0 411.3 L929.1 408.2 L930.3 403.4 L931.4 407.3 L932.6 404.4 L933.7 423.4 L934.9 416.8 L936.0 407.9 L937.2 403.7 L938.3 403.6 L939.5 403.7 L940.6 407.5 L941.8 404.8 L942.9 405.3 L944.1 405.2 L945.2 412.6 L946.4 402.8 L947.5 409.5 L948.7 402.7 L949.8 402.7 L951.0 422.7 L952.1 405.3 L953.3 403.1 L954.4 402.7 L955.6 405.4 L956.7 407.9 L957.9 409.2 L959.0 402.7 L960.2 409.2 L961.3 404.3 L962.5 411.5 L963.6 404.7 L964.8 402.7 L965.9 411.9 L967.1 403.1 L968.2 404.9 L969.4 402.9 L970.5 403.6 L971.7 408.7 L972.8 402.8 L974.0 405.1 L975.1 421.9 L976.3 426.4 L977.4 405.0 L978.6 405.4 L979.7 407.3 L980.9 411.5 L982.0 406.7 L983.2 407.1 L984.3 403.0 L985.5 428.2 L986.6 403.4 L987.8 403.0 L988.9 412.5 L990.1 402.8 L991.2 403.5 L992.4 402.8 L993.5 407.5 L994.7 406.3 L995.8 406.0 L997.0 402.6 L998.1 404.2 L999.3 406.4 L1000.4 405.6 L1001.6 407.8 L1002.7 418.3 L1003.9 413.5 L1005.0 403.0 L1006.2 407.6 L1007.3 402.7 L1008.5 408.3 L1009.6 408.0 L1010.8 404.8 L1011.9 409.8 L1013.1 406.3 L1014.2 402.7 L1015.4 402.9 L1016.5 403.1 L1017.7 404.0 L1018.8 402.8 L1020.0 402.7 L1021.1 404.5 L1022.3 403.5 L1023.4 418.1 L1024.6 403.4 L1025.7 405.4 L1026.9 403.4 L1028.0 403.9 L1029.2 407.6 L1030.3 418.2 L1031.5 402.8 L1032.6 412.1 L1033.8 405.2 L1034.9 406.7 L1036.1 407.4 L1037.2 403.4 L1038.4 402.7 L1039.5 408.1 L1040.7 403.8 L1041.8 407.3 L1043.0 404.5 L1044.1 406.0 L1045.3 410.5 L1046.4 410.7 L1047.6 392.4 L1048.7 381.4 L1049.9 370.8 L1051.0 360.5 L1052.2 350.5 L1053.3 340.8 L1054.5 331.4 L1055.6 322.3 L1056.8 313.5 L1057.9 305.0 L1059.1 296.9 L1060.2 289.0 L1061.4 281.4 L1062.5 274.1 L1063.7 267.1 L1064.8 260.5 L1066.0 254.1 L1067.1 248.0 L1068.3 242.3 L1069.4 236.8 L1070.6 231.7 L1071.7 226.8 L1072.9 222.2 L1074.0 218.0 L1075.2 214.1 L1076.3 210.4 L1077.5 207.1 L1078.6 204.0 L1079.8 201.3 L1080.9 198.9 L1082.1 196.7 L1083.2 194.9 L1084.4 193.4 L1085.5 192.2 L1086.7 191.3 L1087.8 190.7 L1089.0 190.3 L1089.6 190.3 L1090.1 190.3 L1091.3 190.6 L1092.4 191.2 L1093.6 192.1 L1094.7 193.3 L1095.9 194.8 L1097.0 196.7 L1098.2 198.8 L1099.3 201.2 L1100.5 203.9 L1101.6 206.9 L1102.8 210.3 L1103.9 213.9 L1105.1 217.8 L1106.2 222.1 L1107.4 226.6 L1108.5 231.4 L1109.7 236.6 L1110.8 242.0 L1112.0 247.8 L1113.1 253.8 L1114.3 260.2 L1115.4 266.8 L1116.6 273.8 L1117.7 281.1 L1118.9 288.6 L1120.0 296.5 L1121.2 304.7 L1122.3 313.2 L1123.5 321.9 L1124.6 331.0 L1125.8 340.4 L1126.9 350.1 L1128.1 360.1 L1129.2 370.4 L1130.4 381.0 L1131.5 391.9 L1132.7 406.1 L1133.8 408.9 L1135.0 404.2 L1136.1 423.8 L1137.3 407.3 L1138.4 405.3 L1139.6 402.7 L1140.7 403.9 L1141.9 402.9 L1143.0 405.2 L1144.2 408.6 L1145.3 408.4 L1146.5 402.7 L1147.6 403.6 L1148.8 407.2 L1149.9 422.2 L1151.1 404.9 L1152.2 403.7 L1153.4 405.7 L1154.5 408.1 L1155.7 403.8 L1156.8 402.8 L1158.0 408.8 L1159.1 420.7 L1160.3 406.7 L1161.4 405.7 L1162.6 403.7 L1163.7 409.6 L1164.9 403.2 L1166.0 403.4 L1167.2 404.9 L1168.3 409.4 L1169.5 402.7 L1170.6 407.2 L1171.8 403.1 L1172.9 408.7 L1174.1 408.9 L1175.2 403.3 L1176.4 407.4 L1177.5 402.7 L1178.7 405.0 L1179.8 409.9 L1181.0 408.9 L1182.1 405.7 L1183.3 403.8 L1184.4 402.7 L1185.6 411.3 L1186.7 406.0 L1187.9 409.2 L1189.0 402.7 L1190.2 411.5 L1191.4 417.8 L1192.5 416.8 L1193.7 406.0 L1194.8 402.8 L1196.0 402.9 L1197.1 403.4" fill="none" stroke="#127012" stroke-width="1.05" stroke-linejoin="miter"/><circle cx="1089.6" cy="190.6" r="4" fill="none" stroke="#ff2020" stroke-width="1.2"/></svg>
<svg class="r" style="left:1086px;top:176px" width="6" height="9" viewBox="1086 176 6 9"><path d="M1087.8 178.6 L1089.6 177.6 V184" stroke="#ff1a1a" stroke-width="1" fill="none"/></svg>
<div class="t" style="right:1029.7px;top:502.99px;font-size:9.2px;line-height:11.04px;color:#000;text-align:right;">-1</div>
<div class="t" style="right:1029.7px;top:467.69px;font-size:9.2px;line-height:11.04px;color:#000;text-align:right;">0</div>
<div class="t" style="right:1029.7px;top:432.39px;font-size:9.2px;line-height:11.04px;color:#000;text-align:right;">1</div>
<div class="t" style="right:1029.7px;top:397.09px;font-size:9.2px;line-height:11.04px;color:#000;text-align:right;">2</div>
<div class="t" style="right:1029.7px;top:361.79px;font-size:9.2px;line-height:11.04px;color:#000;text-align:right;">3</div>
<div class="t" style="right:1029.7px;top:326.49px;font-size:9.2px;line-height:11.04px;color:#000;text-align:right;">4</div>
<div class="t" style="right:1029.7px;top:291.19px;font-size:9.2px;line-height:11.04px;color:#000;text-align:right;">5</div>
<div class="t" style="right:1029.7px;top:255.89px;font-size:9.2px;line-height:11.04px;color:#000;text-align:right;">6</div>
<div class="t" style="right:1029.7px;top:220.59px;font-size:9.2px;line-height:11.04px;color:#000;text-align:right;">7</div>
<div class="t" style="right:1029.7px;top:185.29px;font-size:9.2px;line-height:11.04px;color:#000;text-align:right;">8</div>
<div class="t" style="right:1029.7px;top:149.99px;font-size:9.2px;line-height:11.04px;color:#000;text-align:right;">9</div>
<div class="t" style="left:153px;width:400px;top:517.09px;font-size:9.2px;line-height:11.04px;color:#000;text-align:center;">466.43 M</div>
<div class="t" style="left:347.5px;width:400px;top:517.09px;font-size:9.2px;line-height:11.04px;color:#000;text-align:center;">480 M</div>
<div class="t" style="left:486.5px;width:400px;top:517.09px;font-size:9.2px;line-height:11.04px;color:#000;text-align:center;">490 M</div>
<div class="t" style="left:623.5px;width:400px;top:517.09px;font-size:9.2px;line-height:11.04px;color:#000;text-align:center;">500 M</div>
<div class="t" style="left:757.5px;width:400px;top:517.09px;font-size:9.2px;line-height:11.04px;color:#000;text-align:center;">510 M</div>
<div class="t" style="left:889.5px;width:400px;top:517.09px;font-size:9.2px;line-height:11.04px;color:#000;text-align:center;">520 M</div>
<div class="t" style="left:997px;width:400px;top:517.09px;font-size:9.2px;line-height:11.04px;color:#000;text-align:center;">528.43 M</div>
<div class="t" style="left:572px;width:400px;top:543.29px;font-size:9.2px;line-height:11.04px;color:#000;text-align:center;">Frequency (Hz)</div>
<div class="t" style="left:278px;top:331px;width:100px;height:12px;font-size:9.1px;line-height:12px;text-align:center;transform:rotate(-90deg);">Electrical Field (dBµV/m)</div>
<div class="t" style="left:392.4px;top:141.39px;font-size:9.2px;line-height:11.04px;color:#000;">RBW (kHz): 120, Horizontal Max Peak</div>
<div class="t" style="right:156.70000000000005px;top:112.29px;font-size:20.3px;line-height:24.36px;color:#111;text-align:right;-webkit-text-stroke:0.45px #111;letter-spacing:0.25px;">RadiMation</div>
<div class="r" style="left:321px;top:618px;width:50px;height:46px;background:#861f80;"></div>
<div class="t bt" style="left:321px;top:617px;width:50px;height:46px;font-size:10.8px;color:#fff;">Peaks</div>
<div class="r" style="left:372px;top:618px;width:88px;height:46px;background:#dcd8ec;"></div>
<svg class="r" style="left:383px;top:627px" width="30" height="26" viewBox="383 627 30 26">
<path d="M398 628.2 L412.2 652.1 L383.8 652.1 Z" fill="#7a749c" stroke="#7a749c" stroke-width="0.8" stroke-linejoin="round"/>
<rect x="395.9" y="633.9" width="4.3" height="8" fill="#fff"/>
<circle cx="398" cy="646.3" r="2.1" fill="#fff"/>
</svg>
<div class="t" style="left:416.5px;top:633.78px;font-size:10.8px;line-height:12.96px;color:#000;">Events</div>
<div class="r" style="left:462px;top:618px;width:43px;height:46px;background:#dcd8ec;"></div>
<div class="t bt" style="left:462px;top:617px;width:43px;height:46px;font-size:10.8px;color:#000;">Note</div>
<div class="r" style="left:320px;top:664px;width:908px;height:236px;background:#fff;box-sizing:border-box;border:1px solid #cdd0df;"></div>
<div class="t" style="left:326.3px;top:672.08px;font-size:10.8px;line-height:12.96px;color:#000;">Max Peaks:</div>
<div class="r" style="left:382px;top:672px;width:77px;height:20px;background:#fff;box-sizing:border-box;border:1px solid #d4d0e6;"></div>
<div class="r" style="left:429px;top:672px;width:30px;height:20px;background:#dcd8ec;"></div>
<div class="r" style="left:433.5px;top:680.0px;width:0;height:0;border-left:4.0px solid transparent;border-right:4.0px solid transparent;border-top:4px solid #7d77a1;"></div>
<div class="r" style="left:447.5px;top:675.8px;width:0;height:0;border-left:4.5px solid transparent;border-right:4.5px solid transparent;border-bottom:4px solid #7d77a1;"></div>
<div class="r" style="left:447.5px;top:685.0px;width:0;height:0;border-left:4.5px solid transparent;border-right:4.5px solid transparent;border-top:4px solid #7d77a1;"></div>
<div class="t" style="right:950px;top:676.38px;font-size:10.8px;line-height:12.96px;color:#000;text-align:right;">1</div>
<div class="r" style="left:462px;top:671px;width:100px;height:23px;background:#f7f7fc;box-sizing:border-box;border:1px solid #79739f;box-shadow: inset 0 0 0 1px #fff;"></div>
<div class="t bt" style="left:462px;top:671px;width:100px;height:23px;font-size:10.8px;color:#8981ad;"><span>Detect Peaks</span></div>
<div class="r" style="left:464px;top:673px;width:96px;height:19px;box-sizing:border-box;border:1px dotted #6a6a6a;"></div>
<div class="r" style="left:565px;top:671px;width:100px;height:23px;background:#f7f7fc;box-sizing:border-box;border:1px solid #79739f;box-shadow: inset 0 0 0 1px #fff;"></div>
<div class="t bt" style="left:565px;top:671px;width:100px;height:23px;font-size:10.8px;color:#8981ad;"><span>Measure Peaks</span></div>
<div class="r" style="left:668px;top:671px;width:104px;height:23px;background:#f7f7fc;box-sizing:border-box;border:1px solid #79739f;box-shadow: inset 0 0 0 1px #fff;"></div>
<div class="t bt" style="left:668px;top:671px;width:104px;height:23px;font-size:10.8px;color:#8981ad;"><span>Peak Actions</span></div>
<div class="r" style="left:849px;top:671px;width:100px;height:23px;background:#f7f7fc;box-sizing:border-box;border:1px solid #79739f;box-shadow: inset 0 0 0 1px #fff;"></div>
<div class="t bt" style="left:849px;top:671px;width:100px;height:23px;font-size:10.8px;color:#8981ad;"><span>Delete Peaks</span></div>
<div class="r" style="left:324px;top:700px;width:60px;height:20px;background:#dcd8ec;"></div>
<div class="t" style="left:327.7px;top:702.78px;font-size:10.8px;line-height:12.96px;color:#000;width:56px;overflow:hidden;">Selected</div>
<div class="r" style="left:385px;top:700px;width:82px;height:20px;background:#dcd8ec;"></div>
<div class="t" style="left:388.7px;top:702.78px;font-size:10.8px;line-height:12.96px;color:#000;width:78px;overflow:hidden;">Peak Number</div>
<div class="r" style="left:468px;top:700px;width:101px;height:20px;background:#dcd8ec;"></div>
<div class="t" style="left:471.7px;top:702.78px;font-size:10.8px;line-height:12.96px;color:#000;width:97px;overflow:hidden;">Frequency (MHz)</div>
<div class="r" style="left:570px;top:700px;width:89px;height:20px;background:#dcd8ec;"></div>
<div class="t" style="left:573.7px;top:702.78px;font-size:10.8px;line-height:12.96px;color:#000;width:85px;overflow:hidden;">Peak (dBµV/m)</div>
<div class="r" style="left:660px;top:700px;width:122px;height:20px;background:#dcd8ec;"></div>
<div class="t" style="left:663.7px;top:702.78px;font-size:10.8px;line-height:12.96px;color:#000;width:118px;overflow:hidden;">Antenna distance (m)</div>
<div class="r" style="left:783px;top:700px;width:69px;height:20px;background:#dcd8ec;"></div>
<div class="t" style="left:786.7px;top:702.78px;font-size:10.8px;line-height:12.96px;color:#000;width:65px;overflow:hidden;">Height (m)</div>
<div class="r" style="left:853px;top:700px;width:96px;height:20px;background:#dcd8ec;"></div>
<div class="t" style="left:856.7px;top:702.78px;font-size:10.8px;line-height:12.96px;color:#000;width:92px;overflow:hidden;">Peak Correction (dB)</div>
<div class="r" style="left:324px;top:720px;width:625px;height:18px;background:#efeef7;"></div>
<svg class="r" style="left:348px;top:722px" width="13" height="13" viewBox="0 0 13 13">
<rect x="0.5" y="0.5" width="12" height="12" fill="#f9f9fd" stroke="#79739f"/>
<path d="M3.2 6.8 L5.4 9.4 L9.8 3.4" stroke="#79739f" stroke-width="2.2" fill="none" stroke-linecap="round" stroke-linejoin="round"/>
</svg>
<div class="t" style="right:911px;top:721.78px;font-size:10.8px;line-height:12.96px;color:#000;text-align:right;">1</div>
<div class="t" style="left:471.5px;top:721.78px;font-size:10.8px;line-height:12.96px;color:#000;">520</div>
<div class="t" style="left:573px;top:721.78px;font-size:10.8px;line-height:12.96px;color:#000;">7.99</div>
<div class="t" style="left:663.5px;top:721.78px;font-size:10.8px;line-height:12.96px;color:#000;">3</div>
<div class="t" style="left:786.5px;top:721.78px;font-size:10.8px;line-height:12.96px;color:#000;">1</div>
<div class="t" style="left:856.5px;top:721.78px;font-size:10.8px;line-height:12.96px;color:#000;">0.000000</div>
<div class="r" style="left:324px;top:878px;width:625px;height:17px;background:#f7f7fc;box-sizing:border-box;border:1px solid #79739f;"></div>
<div class="r" style="left:341px;top:878px;width:495px;height:17px;background:#861f80;"></div>
<div class="r" style="left:932px;top:878px;width:1px;height:17px;background:#79739f;"></div>
<div class="r" style="left:340px;top:878px;width:1px;height:17px;background:#79739f;"></div>
<div class="r" style="left:329px;top:882px;width:0;height:0;border-top:4.5px solid transparent;border-bottom:4.5px solid transparent;border-right:5px solid #79739f;"></div>
<div class="r" style="left:938px;top:882px;width:0;height:0;border-top:4.5px solid transparent;border-bottom:4.5px solid transparent;border-left:5px solid #79739f;"></div>
<div class="t" style="left:952.7px;top:617.78px;font-size:10.8px;line-height:12.96px;color:#000;">Sweeps:</div>
<div class="r" style="left:1019px;top:615px;width:84px;height:20px;background:#dcd8ec;"></div>
<div class="r" style="left:1023px;top:617px;width:50px;height:16px;background:#fff;"></div>
<div class="t" style="right:306px;top:618.78px;font-size:10.8px;line-height:12.96px;color:#000;text-align:right;">1</div>
<div class="r" style="left:1077.0px;top:623px;width:0;height:0;border-left:4.0px solid transparent;border-right:4.0px solid transparent;border-top:4px solid #7d77a1;"></div>
<div class="r" style="left:1091.5px;top:617.5px;width:0;height:0;border-left:4.5px solid transparent;border-right:4.5px solid transparent;border-bottom:4px solid #7d77a1;"></div>
<div class="r" style="left:1091.5px;top:627.5px;width:0;height:0;border-left:4.5px solid transparent;border-right:4.5px solid transparent;border-top:4px solid #7d77a1;"></div>
<div class="r" style="left:1106px;top:612px;width:121px;height:25px;background:#f7f7fc;box-sizing:border-box;border:1px solid #79739f;box-shadow: inset 0 0 0 1px #fff;"></div>
<div class="t bt" style="left:1106px;top:612px;width:121px;height:25px;font-size:10.8px;color:#8981ad;"><span>Take sweeps</span></div>
<div class="t" style="left:954.6px;top:671.78px;font-size:10.8px;line-height:12.96px;color:#000;">Frequency:</div>
<div class="t" style="left:1038px;top:671.78px;font-size:10.8px;line-height:12.96px;color:#000;">-</div>
<div class="r" style="left:955px;top:688px;width:260px;height:1px;background:#000;"></div>
<div class="t" style="left:1038px;top:692.78px;font-size:10.8px;line-height:12.96px;color:#000;">Last</div>
<div class="t" style="left:954.6px;top:708.78px;font-size:10.8px;line-height:12.96px;color:#000;">Peak:</div>
<div class="t" style="left:1038px;top:708.78px;font-size:10.8px;line-height:12.96px;color:#000;">-</div>
<div class="t" style="left:1125.5px;top:708.78px;font-size:10.8px;line-height:12.96px;color:#000;">-</div>
<div class="t" style="left:954.6px;top:724.78px;font-size:10.8px;line-height:12.96px;color:#000;">Average:</div>
<div class="t" style="left:1038px;top:724.78px;font-size:10.8px;line-height:12.96px;color:#000;">-</div>
<div class="t" style="left:1125.5px;top:724.78px;font-size:10.8px;line-height:12.96px;color:#000;">-</div>
<div class="t" style="left:954.6px;top:740.78px;font-size:10.8px;line-height:12.96px;color:#000;">Quasi Peak:</div>
<div class="t" style="left:1038px;top:740.78px;font-size:10.8px;line-height:12.96px;color:#000;">-</div>
<div class="t" style="left:1125.5px;top:740.78px;font-size:10.8px;line-height:12.96px;color:#000;">-</div>
<div class="t" style="left:954.6px;top:756.78px;font-size:10.8px;line-height:12.96px;color:#000;">RMS:</div>
<div class="t" style="left:1038px;top:756.78px;font-size:10.8px;line-height:12.96px;color:#000;">-</div>
<div class="t" style="left:1125.5px;top:756.78px;font-size:10.8px;line-height:12.96px;color:#000;">-</div>
<div class="r" style="left:958px;top:780px;width:254px;height:25px;background:#f7f7fc;box-sizing:border-box;border:1px solid #79739f;box-shadow: inset 0 0 0 1px #fff;"></div>
<div class="t bt" style="left:958px;top:780px;width:254px;height:25px;font-size:10.8px;color:#8981ad;"><span>Continuous Measure</span></div>
<svg class="r" style="left:957px;top:813px" width="16" height="16" viewBox="0 0 16 16">
<circle cx="8" cy="8" r="6.8" fill="#fff" stroke="#79739f" stroke-width="1.3"/>
<circle cx="8" cy="8" r="4.2" fill="#79739f"/>
</svg>
<div class="t" style="left:975.6px;top:814.78px;font-size:10.8px;line-height:12.96px;color:#000;">Write</div>
<svg class="r" style="left:1084px;top:813px" width="16" height="16" viewBox="0 0 16 16">
<circle cx="8" cy="8" r="6.8" fill="#fff" stroke="#79739f" stroke-width="1.3"/>
</svg>
<div class="t" style="left:1102.6px;top:814.78px;font-size:10.8px;line-height:12.96px;color:#000;">Max-hold</div>
<div class="r" style="left:958px;top:834px;width:254px;height:25px;background:#c0bcd4;"></div>
<div class="t bt" style="left:958px;top:834px;width:254px;height:25px;font-size:10.8px;color:#a29ccb;">Clear measurement data</div>
<div class="r" style="left:1249px;top:46px;width:113px;height:33px;background:#f7f7fc;box-sizing:border-box;border:1px solid #79739f;box-shadow: inset 0 0 0 1px #fff;"></div>
<div class="t bt" style="left:1249px;top:46px;width:113px;height:33px;font-size:10.8px;color:#8981ad;"><span>Automatic</span></div>
<div class="r" style="left:1249px;top:84px;width:113px;height:33px;background:#861f80;"></div>
<div class="t bt" style="left:1249px;top:84px;width:113px;height:33px;font-size:10.8px;color:#9a8fb0;"><span>Manual</span></div>
<div class="r" style="left:1249px;top:122px;width:113px;height:33px;background:#f7f7fc;box-sizing:border-box;border:1px solid #79739f;box-shadow: inset 0 0 0 1px #fff;"></div>
<div class="t bt" style="left:1249px;top:122px;width:113px;height:33px;font-size:10.8px;color:#8981ad;"><span>View</span></div>
<div class="r" style="left:1249px;top:162px;width:113px;height:33px;background:#f7f7fc;box-sizing:border-box;border:1px solid #79739f;box-shadow: inset 0 0 0 1px #fff;"></div>
<div class="t bt" style="left:1249px;top:162px;width:113px;height:33px;font-size:10.8px;color:#8981ad;"><span>Close</span></div>
<div class="r" style="left:1249px;top:201px;width:113px;height:33px;background:#f7f7fc;box-sizing:border-box;border:1px solid #79739f;box-shadow: inset 0 0 0 1px #fff;"></div>
<div class="t bt" style="left:1249px;top:201px;width:113px;height:33px;font-size:10.8px;color:#8981ad;"><span>Environment</span></div>
<div class="r" style="left:1249px;top:240px;width:113px;height:33px;background:#f7f7fc;box-sizing:border-box;border:1px solid #79739f;box-shadow: inset 0 0 0 1px #fff;"></div>
<div class="t bt" style="left:1249px;top:240px;width:113px;height:33px;font-size:10.8px;color:#8981ad;"><span>Units</span></div>
<div class="r" style="left:1249px;top:279px;width:113px;height:33px;background:#f7f7fc;box-sizing:border-box;border:1px solid #79739f;box-shadow: inset 0 0 0 1px #fff;"></div>
<div class="t bt" style="left:1249px;top:279px;width:113px;height:33px;font-size:10.8px;color:#8981ad;"><span>Note</span></div>
<div class="r" style="left:1249px;top:318px;width:113px;height:33px;background:#f7f7fc;box-sizing:border-box;border:1px solid #79739f;box-shadow: inset 0 0 0 1px #fff;"></div>
<div class="t bt" style="left:1249px;top:318px;width:113px;height:33px;font-size:10.8px;color:#8981ad;"><span>Limit Lines</span></div>
<div class="r" style="left:1249px;top:357px;width:113px;height:33px;background:#f7f7fc;box-sizing:border-box;border:1px solid #79739f;box-shadow: inset 0 0 0 1px #fff;"></div>
<div class="t bt" style="left:1249px;top:357px;width:113px;height:33px;font-size:10.8px;color:#8981ad;"><span>Reporting</span></div>
</body></html>
